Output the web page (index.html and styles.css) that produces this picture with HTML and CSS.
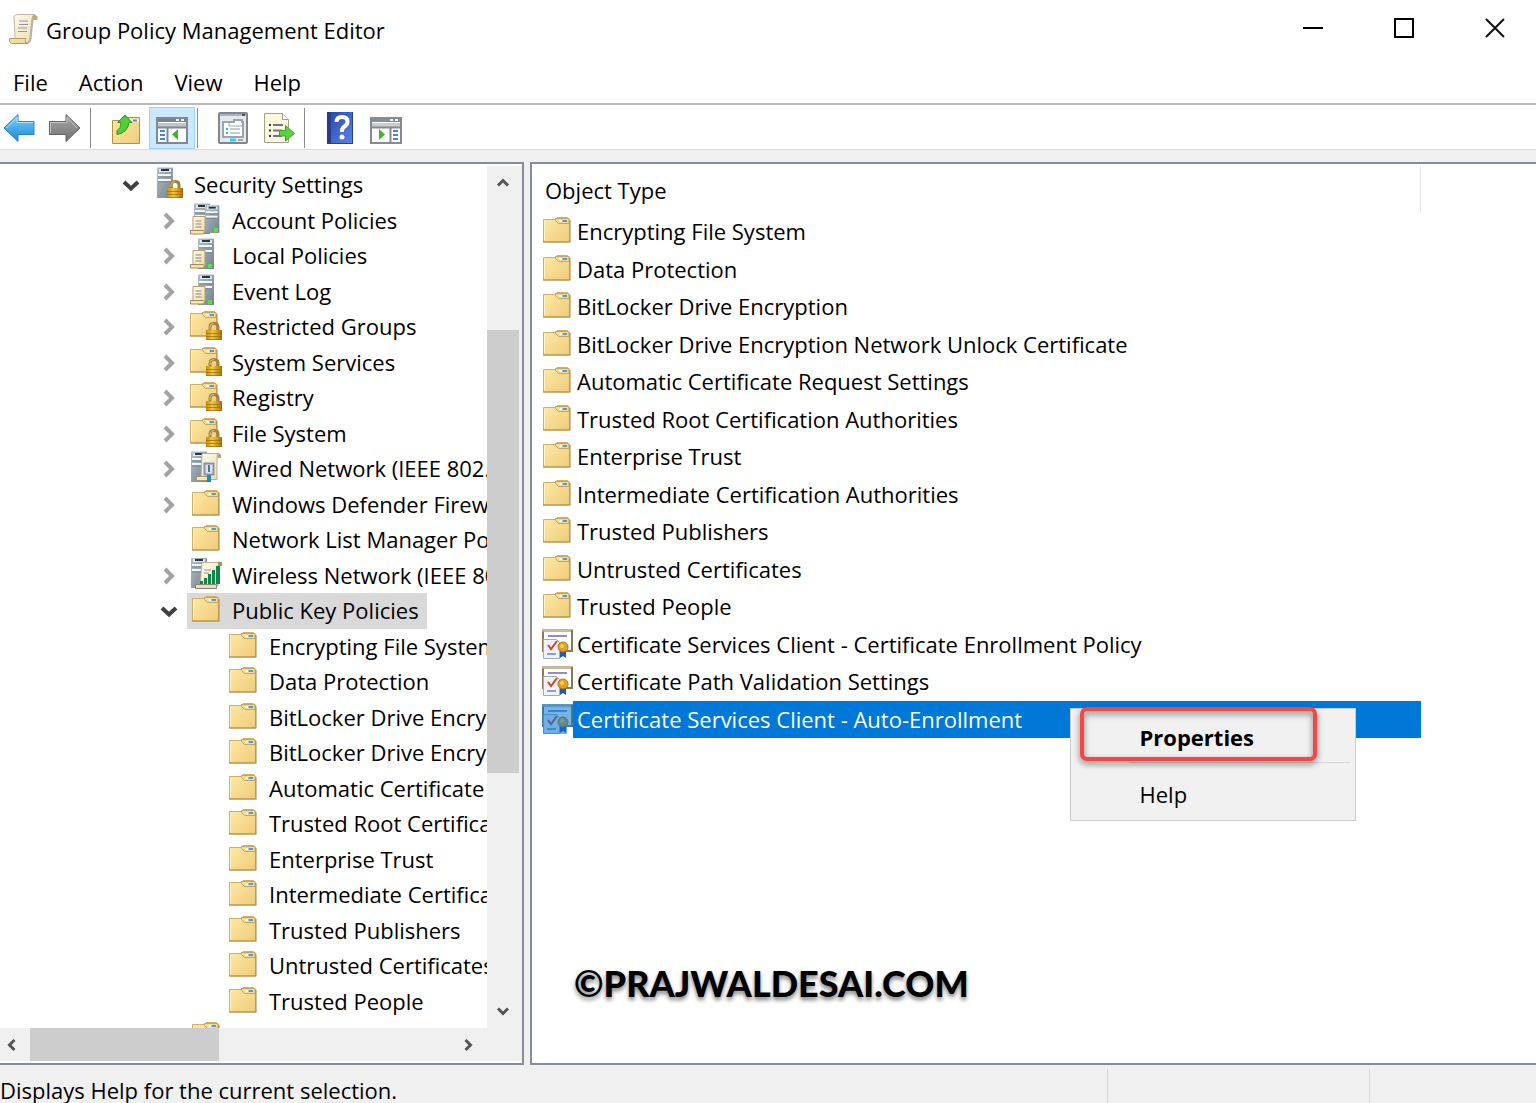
FILE: index.html
```html
<!DOCTYPE html>
<html lang="en">
<head>
    <meta charset="UTF-8">
    <meta name="viewport" content="width=device-width, initial-scale=1.0">
    <title>Group Policy Management Editor</title>
    <link rel="stylesheet" href="styles.css">
</head>
<body>
    <!-- shared icons -->
    <svg class="sprite" aria-hidden="true">
        <defs>
            <linearGradient id="gFolder" x1="0" y1="0" x2="1" y2="1">
                <stop offset="0" stop-color="#ffeaa6"/><stop offset="1" stop-color="#efcb7a"/>
            </linearGradient>
            <linearGradient id="gServer" x1="0" y1="0" x2="1" y2="1">
                <stop offset="0" stop-color="#b4c0c8"/><stop offset="1" stop-color="#71808c"/>
            </linearGradient>
            <linearGradient id="gPaper" x1="0" y1="0" x2="1" y2="1">
                <stop offset="0" stop-color="#fffdf0"/><stop offset="1" stop-color="#eadba9"/>
            </linearGradient>
            <linearGradient id="gBlue" x1="0" y1="0" x2="0" y2="1">
                <stop offset="0" stop-color="#7fd0f8"/><stop offset="1" stop-color="#1589d8"/>
            </linearGradient>
            <linearGradient id="gGray" x1="0" y1="0" x2="0" y2="1">
                <stop offset="0" stop-color="#aaa"/><stop offset="1" stop-color="#6f6f6f"/>
            </linearGradient>
            <linearGradient id="gHelp" x1="0" y1="0" x2="1" y2="1">
                <stop offset="0" stop-color="#2344ae"/><stop offset="1" stop-color="#5c85e6"/>
            </linearGradient>
            <linearGradient id="gLock" x1="0" y1="0" x2="1" y2="0">
                <stop offset="0" stop-color="#c58a0c"/><stop offset=".4" stop-color="#f2c840"/><stop offset="1" stop-color="#a87000"/>
            </linearGradient>
            <g id="folder">
                <path d="M.5 2.5h11.500l2-2h10.500l2 2v22.500h-26z" fill="url(#gFolder)" stroke="#d0ae68"/>
                <path d="M12.500 1.500h13.500v5h-10.500l-3-3z" fill="#f6dc91" stroke="#c9a45a"/>
                <path d="M16.500 3h3v2h-3z" fill="#fff"/>
                <path d="M19.500 3h4.500v2h-4.500z" fill="#4b9be0"/>
                <path d="M1.500 4v19.500" stroke="#fff3c8"/>
                <path d="M0 25h27.500M27 3v22" stroke="#ab8842" fill="none"/>
            </g>
            <g id="lock">
                <path d="M4 8V5q0-3.500 4-3.500t4 3.500v3" fill="none" stroke="#a38340" stroke-width="3"/>
                <path d="M4 7V5q0-3.500 4-3.500" fill="none" stroke="#d6c17e"/>
                <rect y="8" width="16" height="10" fill="url(#gLock)"/>
                <path d="M0 11.500h16M0 14.500h16M0 17.500h16" stroke="#996600" opacity=".65"/>
            </g>
            <g id="server">
                <rect width="16" height="31" fill="url(#gServer)"/>
                <path d="M0 .5h16" stroke="#d6dee3"/>
                <path d="M2 2h12v3h-12z" fill="#dceaf2"/><path d="M4 2h8v2h-8z" fill="#243440"/>
                <path d="M1 8h13M1 13h13" stroke="#f3f7fa" stroke-width="2"/>
                <path d="M1 10h13M1 15h13" stroke="#7b8994"/>
            </g>
            <g id="scroll">
                <path d="M3 .5h12v15h-12z" fill="url(#gPaper)" stroke="#b59d70"/>
                <path d="M.5 14.500h13q2 1 0 3.500h-13z" fill="#f2e3b5" stroke="#a48b5b"/>
                <path d="M5.500 5h6M5.500 8h6M5.500 11h6" stroke="#8f8577"/>
            </g>
        </defs>
        <symbol id="i-folder" viewBox="0 0 32 32"><use href="#folder" x="2" y="3"/></symbol>
        <symbol id="i-folder-lock" viewBox="0 0 32 32"><use href="#folder" x="0" y="2"/><use href="#lock" x="16" y="13"/></symbol>
        <symbol id="i-server-lock" viewBox="0 0 32 32"><use href="#server" x="5" y="0"/><use href="#lock" x="15" y="13"/></symbol>
        <symbol id="i-servers" viewBox="0 0 32 32">
            <use href="#server" x="4" y="0"/>
            <g transform="translate(15 2) scale(.9 .9)"><use href="#server" x="0" y="0"/></g>
            <use href="#scroll" x="0" y="13"/>
            <path d="M24 25h4v4h-4z" fill="#4be834"/>
        </symbol>
        <symbol id="i-server" viewBox="0 0 32 32">
            <use href="#server" x="8" y="0"/>
            <use href="#scroll" x="0" y="12"/>
            <path d="M18 26h4v4h-4z" fill="#4be834"/>
        </symbol>
        <symbol id="i-wired" viewBox="0 0 32 32">
            <use href="#server" x="1" y="0"/>
            <path d="M12 2.500h17q-2 1-2 4v22h-16z" fill="url(#gPaper)" stroke="#b9ae92"/>
            <path d="M27.500 7V4q2-3 3.500 0v3z" fill="#b6a36d"/>
            <path d="M6.500 25.500h14v4h-14z" fill="#f5e9c1" stroke="#a79774"/>
            <path d="M14.500 12.500h9v11h-9z" fill="#dfe4ef" stroke="#8793ad" stroke-width="2"/>
            <path d="M19 14v7" stroke="#5f6e92" stroke-width="2"/>
            <path d="M17 24h4v7h-4z" fill="#168eb9"/>
        </symbol>
        <symbol id="i-wireless" viewBox="0 0 32 32">
            <use href="#server" x="1" y="-1"/>
            <path d="M12 4.500h18l-2 3v20h-18z" fill="url(#gPaper)" stroke="#b9ae92"/>
            <path d="M28 4h4v4h-4z" fill="#a49568"/>
            <path d="M14 12h7M14 15h5" stroke="#9794a0"/>
            <path d="M5.500 26.500h21v4h-21z" fill="#e3dcc7" stroke="#8d8270"/>
            <path d="M10 26v-3h3v3zM14 26v-6h3v6zM18 26v-10h3v10zM22 26v-14h3v14zM26 26v-18h4v18z" fill="#128548"/>
        </symbol>
        <symbol id="i-cert" viewBox="0 0 32 32">
            <path d="M2 3.500h29v20.500h-29z" fill="#fff" stroke="#8f7750" stroke-width="2"/>
            <path d="M1 3.500h29" stroke="#c9b896" stroke-width="2"/>
            <path d="M7 9h19" stroke="#8790cc" stroke-width="2"/>
            <path d="M2.500 12.500h13l3 3v16h-16z" fill="#f1f3f8" stroke="#a3a9b5"/>
            <path d="M7 18l3 4 6-8" fill="none" stroke="#d2402a" stroke-width="2"/>
            <path d="M6 27h9" stroke="#7ea2e4" stroke-width="2"/>
            <path d="M19 23v8l3-2 3 2v-8z" fill="#1d55c4"/>
            <circle cx="22" cy="20" r="5" fill="#e5a11c" stroke="#b37707"/>
            <circle cx="21" cy="19" r="2" fill="#f8cf5a"/>
        </symbol>
        <symbol id="i-app" viewBox="0 0 32 32">
            <path d="M6 2.500q1-2 4-2h17q-3 1-3 4l-2 20q-1 5-5 5h-14q4-1 4-6z" fill="url(#gPaper)" stroke="#bdb7a5"/>
            <path d="M24 6q0-5 3-5 4 1 2 5z" fill="#c3ac6b"/>
            <path d="M24.500 6l-2 19q-1 4-5 4.500" fill="none" stroke="#b7b3aa" stroke-width="2"/>
            <path d="M1.500 24.500h16q-1 5 2 5h-16q-3-1-2-5z" fill="#efdda6" stroke="#b29c63"/>
            <path d="M11 7h9M11 10.500h9M10 14h9M10 17.500h9" stroke="#9696a8"/>
        </symbol>
        <symbol id="i-back" viewBox="0 0 32 32">
            <path d="M1 16L15 2.500V9.500H31V22.500H15V29.500z" fill="url(#gBlue)" stroke="#2d83b8"/>
            <path d="M3.500 16L14 5.500V10.500H30" fill="none" stroke="#b5e6fc"/>
        </symbol>
        <symbol id="i-forward" viewBox="0 0 32 32">
            <path d="M31 16L17 2.500V9.500H.5V22.500H17V29.500z" fill="url(#gGray)" stroke="#636363"/>
            <path d="M1.500 21V10.500H18V5.500L28 16" fill="none" stroke="#c4c4c4"/>
        </symbol>
        <symbol id="i-up" viewBox="0 0 32 32">
            <path d="M2.500 8.500h13l2-3h12v26h-27z" fill="url(#gFolder)" stroke="#b68f43"/>
            <path d="M19 8.500h10" stroke="#fff" stroke-width="2"/><path d="M23 8.500h4" stroke="#3c93df" stroke-width="2"/>
            <path d="M7 22.500v-4q4-2 4-8H7.500L15 3l7 7.500h-3q-1 10-12 12z" fill="#52cc38" stroke="#2e9822"/>
        </symbol>
        <symbol id="i-tree" viewBox="0 0 32 32">
            <path d="M1 6h30v25h-30z" fill="#fff" stroke="#7e8898" stroke-width="2"/>
            <path d="M2 7h28v3h-28z" fill="#768295"/><path d="M2 11h28v4h-28z" fill="#c2c7cf"/>
            <path d="M20 8h3M25 8h3" stroke="#f2f5f8" stroke-width="2"/>
            <path d="M1 15.500h30M11.500 15v16" stroke="#7e8898" stroke-width="2"/>
            <path d="M4 19h5M4 23h5M4 27h5" stroke="#4589c9" stroke-width="2"/>
            <path d="M22 17v11l-6-5.500z" fill="#42b529"/>
        </symbol>
        <symbol id="i-actions" viewBox="0 0 32 32">
            <path d="M1 6h30v25h-30z" fill="#fff" stroke="#858a91" stroke-width="2"/>
            <path d="M2 7h28v3h-28z" fill="#858d98"/><path d="M2 11h28v4h-28z" fill="#c9ccd1"/>
            <path d="M20 8h3M25 8h3" stroke="#f2f5f8" stroke-width="2"/>
            <path d="M1 15.500h30M20.500 15v16" stroke="#858a91" stroke-width="2"/>
            <path d="M23 19h5M23 23h5M23 27h5" stroke="#4589c9" stroke-width="2"/>
            <path d="M9 17v11l6-5.500z" fill="#42b529"/>
        </symbol>
        <symbol id="i-props" viewBox="0 0 32 32">
            <rect x="2" y="1" width="28" height="30" rx="1" fill="#e7eaed" stroke="#7f878f" stroke-width="2"/>
            <path d="M3 3h26" stroke="#aab4bf" stroke-width="2"/><path d="M25 3h3" stroke="#44546a" stroke-width="2"/>
            <path d="M6 10h11v-2h8v2h1v15H6z" fill="#fff" stroke="#9aa5b3" stroke-width="2"/>
            <path d="M12 11v3h13" fill="none" stroke="#9aa5b3"/>
            <path d="M9 17h2M9 21h2" stroke="#18bff2" stroke-width="2"/>
            <path d="M13 17h10M13 21h10" stroke="#8e98a5"/>
            <path d="M13 28h6" stroke="#22cff5" stroke-width="3"/><path d="M21 28h5" stroke="#a1a8af" stroke-width="2"/>
        </symbol>
        <symbol id="i-export" viewBox="0 0 32 32">
            <path d="M1.500 1.500h18l6 6v23h-24z" fill="#fcf7df" stroke="#a49e8f"/>
            <path d="M19.500 1.500v6h6" fill="#fff" stroke="#a49e8f"/>
            <path d="M6 13h2M6 18.500h2M6 24h2" stroke="#333" stroke-width="2"/>
            <path d="M10 13h10M10 18.500h9M10 24h9" stroke="#78708e" stroke-width="2"/>
            <path d="M16.500 18.500h6v-5l9 8-9 7.500v-5h-6z" fill="#5fd044" stroke="#38a528"/>
        </symbol>
        <symbol id="i-help" viewBox="0 0 32 32">
            <path d="M3 0h26v32h-26z" fill="url(#gHelp)"/>
            <path d="M3 0h4v32h-4z" fill="#2a3c83"/>
            <path d="M12.500 10q0-5 5.500-5t5.500 4.500q0 3-3 5t-2.500 5.500" fill="none" stroke="#fff" stroke-width="4"/>
            <circle cx="18" cy="25" r="2.500" fill="#fff"/>
            <path d="M3 31.500h26M28.500 0v32" stroke="#2541a0"/>
        </symbol>
        <symbol id="i-closed" viewBox="0 0 18 18"><path d="M5 2l7 7-7 7" fill="none" stroke="#a3a3a3" stroke-width="4"/></symbol>
        <symbol id="i-open" viewBox="0 0 18 18"><path d="M2 6l7 6.500L16 6" fill="none" stroke="#404040" stroke-width="4"/></symbol>
        <symbol id="i-arrow" viewBox="0 0 14 14"><path d="M2 9.500L7 4.500l5 5" fill="none" stroke="#555" stroke-width="3"/></symbol>
    </svg>

    <header class="title-bar">
        <svg class="icon"><use href="#i-app"/></svg>
        <h1>Group Policy Management Editor</h1>
        <div class="window-buttons">
            <button type="button" aria-label="Minimize"><svg viewBox="0 0 20 20"><path d="M0 10h20" stroke="#000" stroke-width="2"/></svg></button>
            <button type="button" aria-label="Maximize"><svg viewBox="0 0 20 20"><path d="M1 1h18v18H1z" fill="none" stroke="#000" stroke-width="2"/></svg></button>
            <button type="button" aria-label="Close"><svg viewBox="0 0 20 20"><path d="M1 1l18 18M19 1L1 19" stroke="#111" stroke-width="2"/></svg></button>
        </div>
    </header>

    <nav class="menu-bar">
        <button type="button">File</button>
        <button type="button">Action</button>
        <button type="button">View</button>
        <button type="button">Help</button>
    </nav>

    <div class="toolbar">
        <button type="button" class="tool" aria-label="Back"><svg class="icon"><use href="#i-back"/></svg></button>
        <button type="button" class="tool" aria-label="Forward"><svg class="icon"><use href="#i-forward"/></svg></button>
        <span class="divider"></span>
        <button type="button" class="tool" aria-label="Up one level"><svg class="icon"><use href="#i-up"/></svg></button>
        <button type="button" class="tool active" aria-label="Show console tree"><svg class="icon"><use href="#i-tree"/></svg></button>
        <span class="divider"></span>
        <button type="button" class="tool" aria-label="Properties"><svg class="icon"><use href="#i-props"/></svg></button>
        <button type="button" class="tool" aria-label="Export list"><svg class="icon"><use href="#i-export"/></svg></button>
        <span class="divider"></span>
        <button type="button" class="tool" aria-label="Help"><svg class="icon"><use href="#i-help"/></svg></button>
        <button type="button" class="tool" aria-label="Show action pane"><svg class="icon"><use href="#i-actions"/></svg></button>
    </div>

    <main>
        <section class="tree-pane">
            <ul class="tree">
                <li><svg class="chevron"><use href="#i-open"/></svg><span class="node"><svg class="icon"><use href="#i-server-lock"/></svg>Security Settings</span></li>
                <li class="level1"><svg class="chevron"><use href="#i-closed"/></svg><span class="node"><svg class="icon"><use href="#i-servers"/></svg>Account Policies</span></li>
                <li class="level1"><svg class="chevron"><use href="#i-closed"/></svg><span class="node"><svg class="icon"><use href="#i-server"/></svg>Local Policies</span></li>
                <li class="level1"><svg class="chevron"><use href="#i-closed"/></svg><span class="node"><svg class="icon"><use href="#i-server"/></svg>Event Log</span></li>
                <li class="level1"><svg class="chevron"><use href="#i-closed"/></svg><span class="node"><svg class="icon"><use href="#i-folder-lock"/></svg>Restricted Groups</span></li>
                <li class="level1"><svg class="chevron"><use href="#i-closed"/></svg><span class="node"><svg class="icon"><use href="#i-folder-lock"/></svg>System Services</span></li>
                <li class="level1"><svg class="chevron"><use href="#i-closed"/></svg><span class="node"><svg class="icon"><use href="#i-folder-lock"/></svg>Registry</span></li>
                <li class="level1"><svg class="chevron"><use href="#i-closed"/></svg><span class="node"><svg class="icon"><use href="#i-folder-lock"/></svg>File System</span></li>
                <li class="level1"><svg class="chevron"><use href="#i-closed"/></svg><span class="node"><svg class="icon"><use href="#i-wired"/></svg>Wired Network (IEEE 802.3) Policies</span></li>
                <li class="level1"><svg class="chevron"><use href="#i-closed"/></svg><span class="node"><svg class="icon"><use href="#i-folder"/></svg>Windows Defender Firewall</span></li>
                <li class="level1"><svg class="chevron"></svg><span class="node"><svg class="icon"><use href="#i-folder"/></svg>Network List Manager Policies</span></li>
                <li class="level1"><svg class="chevron"><use href="#i-closed"/></svg><span class="node"><svg class="icon"><use href="#i-wireless"/></svg>Wireless Network (IEEE 802.11)</span></li>
                <li class="level1"><svg class="chevron"><use href="#i-open"/></svg><span class="node selected"><svg class="icon"><use href="#i-folder"/></svg>Public Key Policies</span></li>
                <li class="level2"><svg class="chevron"></svg><span class="node"><svg class="icon"><use href="#i-folder"/></svg>Encrypting File System</span></li>
                <li class="level2"><svg class="chevron"></svg><span class="node"><svg class="icon"><use href="#i-folder"/></svg>Data Protection</span></li>
                <li class="level2"><svg class="chevron"></svg><span class="node"><svg class="icon"><use href="#i-folder"/></svg>BitLocker Drive Encryption</span></li>
                <li class="level2"><svg class="chevron"></svg><span class="node"><svg class="icon"><use href="#i-folder"/></svg>BitLocker Drive Encryption</span></li>
                <li class="level2"><svg class="chevron"></svg><span class="node"><svg class="icon"><use href="#i-folder"/></svg>Automatic Certificate Request</span></li>
                <li class="level2"><svg class="chevron"></svg><span class="node"><svg class="icon"><use href="#i-folder"/></svg>Trusted Root Certification</span></li>
                <li class="level2"><svg class="chevron"></svg><span class="node"><svg class="icon"><use href="#i-folder"/></svg>Enterprise Trust</span></li>
                <li class="level2"><svg class="chevron"></svg><span class="node"><svg class="icon"><use href="#i-folder"/></svg>Intermediate Certification</span></li>
                <li class="level2"><svg class="chevron"></svg><span class="node"><svg class="icon"><use href="#i-folder"/></svg>Trusted Publishers</span></li>
                <li class="level2"><svg class="chevron"></svg><span class="node"><svg class="icon"><use href="#i-folder"/></svg>Untrusted Certificates</span></li>
                <li class="level2"><svg class="chevron"></svg><span class="node"><svg class="icon"><use href="#i-folder"/></svg>Trusted People</span></li>
                <li class="level1"><svg class="chevron"></svg><span class="node"><svg class="icon"><use href="#i-folder"/></svg></span></li>
            </ul>
            <div class="scrollbar vertical">
                <button type="button" aria-label="Scroll up"><svg><use href="#i-arrow"/></svg></button>
                <div class="track"><div class="thumb"></div></div>
                <button type="button" class="down" aria-label="Scroll down"><svg><use href="#i-arrow"/></svg></button>
            </div>
            <div class="scrollbar horizontal">
                <button type="button" class="left" aria-label="Scroll left"><svg><use href="#i-arrow"/></svg></button>
                <div class="track"><div class="thumb"></div></div>
                <button type="button" class="right" aria-label="Scroll right"><svg><use href="#i-arrow"/></svg></button>
            </div>
        </section>

        <section class="list-pane">
            <table>
                <thead>
                    <tr><th>Object Type</th></tr>
                </thead>
                <tbody>
                    <tr><td><div class="item"><svg class="icon"><use href="#i-folder"/></svg><span>Encrypting File System</span></div></td></tr>
                    <tr><td><div class="item"><svg class="icon"><use href="#i-folder"/></svg><span>Data Protection</span></div></td></tr>
                    <tr><td><div class="item"><svg class="icon"><use href="#i-folder"/></svg><span>BitLocker Drive Encryption</span></div></td></tr>
                    <tr><td><div class="item"><svg class="icon"><use href="#i-folder"/></svg><span>BitLocker Drive Encryption Network Unlock Certificate</span></div></td></tr>
                    <tr><td><div class="item"><svg class="icon"><use href="#i-folder"/></svg><span>Automatic Certificate Request Settings</span></div></td></tr>
                    <tr><td><div class="item"><svg class="icon"><use href="#i-folder"/></svg><span>Trusted Root Certification Authorities</span></div></td></tr>
                    <tr><td><div class="item"><svg class="icon"><use href="#i-folder"/></svg><span>Enterprise Trust</span></div></td></tr>
                    <tr><td><div class="item"><svg class="icon"><use href="#i-folder"/></svg><span>Intermediate Certification Authorities</span></div></td></tr>
                    <tr><td><div class="item"><svg class="icon"><use href="#i-folder"/></svg><span>Trusted Publishers</span></div></td></tr>
                    <tr><td><div class="item"><svg class="icon"><use href="#i-folder"/></svg><span>Untrusted Certificates</span></div></td></tr>
                    <tr><td><div class="item"><svg class="icon"><use href="#i-folder"/></svg><span>Trusted People</span></div></td></tr>
                    <tr><td><div class="item"><svg class="icon"><use href="#i-cert"/></svg><span>Certificate Services Client - Certificate Enrollment Policy</span></div></td></tr>
                    <tr><td><div class="item"><svg class="icon"><use href="#i-cert"/></svg><span>Certificate Path Validation Settings</span></div></td></tr>
                    <tr><td>
                        <div class="item selected">
                            <svg class="icon" viewBox="0 0 32 32"><use href="#i-cert"/><path d="M1 2h31v23h-6v7h-24v-7h-1z" fill="#0078d7" opacity=".55"/></svg>
                            <span>Certificate Services Client - Auto-Enrollment</span>
                            <div class="context-menu">
                                <button type="button" class="default">Properties</button>
                                <hr>
                                <button type="button">Help</button>
                                <div class="callout"></div>
                            </div>
                        </div>
                    </td></tr>
                </tbody>
            </table>
            <p class="watermark">©PRAJWALDESAI.COM</p>
        </section>
    </main>

    <footer class="status-bar">
        <span class="message">Displays Help for the current selection.</span>
        <span class="cell"></span>
        <span class="cell last"></span>
    </footer>
</body>
</html>
```
FILE: styles.css
```css
* {
    box-sizing: border-box;
}
body {
    display: flex;
    flex-direction: column;
    height: 100vh;
    margin: 0;
    overflow: hidden;
    background: #f0f0f0;
    color: #000;
    font-family: "Segoe UI", "Open Sans", sans-serif;
    font-size: 22px;
    line-height: 30px;
}
button {
    padding: 0;
    border: none;
    background: none;
    color: inherit;
    font: inherit;
}
.sprite {
    position: absolute;
    width: 0;
    height: 0;
}
.icon {
    display: block;
    flex: none;
    width: 32px;
    height: 32px;
}

/* title and menu */
.title-bar {
    display: flex;
    flex: none;
    align-items: center;
    height: 60px;
    padding: 0 0 1px 8px;
    background: #fff;
}
h1 {
    flex: 1;
    margin: 0 0 0 6px;
    font-size: 22px;
    font-weight: normal;
}
.window-buttons {
    display: flex;
    gap: 9px;
    align-self: flex-start;
}
.window-buttons button {
    display: flex;
    align-items: center;
    justify-content: center;
    width: 82px;
    height: 56px;
}
.window-buttons svg {
    width: 20px;
    height: 20px;
}
.menu-bar {
    display: flex;
    flex: none;
    gap: 31px;
    height: 45px;
    padding: 0 13px;
    background: #fff;
    border-bottom: 2px solid #b9b9b9;
}

/* toolbar */
.toolbar {
    display: flex;
    flex: none;
    height: 45px;
    padding: 2px 0 0;
    background: #fff;
    border-bottom: 1px solid #dcdcdc;
}
.tool {
    display: flex;
    align-items: center;
    justify-content: center;
    width: 46px;
}
.tool:first-child {
    width: 42px;
    padding-right: 4px;
}
.tool.active {
    background: #cce8ff;
    border: 1px solid #99d1ff;
}
.divider {
    width: 1px;
    margin: 1px 12px 1px 2px;
    background: #8c8c8c;
}

/* panes */
main {
    display: flex;
    flex: 1;
    gap: 6px;
    min-height: 0;
    padding-top: 12px;
}
.tree-pane {
    display: grid;
    flex: none;
    grid-template-columns: 1fr 35px;
    grid-template-rows: 1fr 35px;
    width: 524px;
    padding-top: 2px;
    background: #fff;
    border: 2px solid #868c98;
    border-left: none;
}
.tree {
    min-height: 0;
    margin: 0;
    padding: 1px 0 0;
    overflow: hidden;
    list-style: none;
}
.tree li {
    display: flex;
    height: 36px;
    padding-left: 114px;
    line-height: 34px;
    white-space: nowrap;
}
.tree li:nth-child(even) {
    height: 35px;
}
.tree .level1 {
    padding-left: 152px;
}
.tree .level2 {
    padding-left: 189px;
}
.chevron {
    flex: none;
    align-self: center;
    width: 34px;
    height: 18px;
}
.node {
    display: flex;
    gap: 10px;
    margin-left: 1px;
    padding: 0 8px 0 3px;
}
.node.selected {
    background: #d9d9d9;
}

/* scroll bars */
.scrollbar {
    display: flex;
    background: #f0f0f0;
}
.scrollbar button {
    display: flex;
    flex: none;
    align-items: center;
    justify-content: center;
}
.scrollbar svg {
    width: 14px;
    height: 14px;
}
.track {
    display: flex;
    flex: 1;
}
.thumb {
    background: #cdcdcd;
}
.vertical {
    flex-direction: column;
}
.vertical button {
    width: 32px;
    height: 34px;
}
.vertical .track {
    flex-direction: column;
    padding: 130px 3px 221px 0;
}
.vertical .thumb {
    flex: 1;
}
.horizontal {
    grid-column: 1 / 3;
    padding-right: 35px;
    border-bottom: 2px solid #fff;
}
.horizontal button {
    width: 30px;
}
.horizontal .left {
    padding-right: 6px;
}
.horizontal .right {
    width: 38px;
}
.horizontal .thumb {
    width: 45%;
}
.down svg {
    transform: rotate(180deg);
}
.left svg {
    transform: rotate(-90deg);
}
.right svg {
    transform: rotate(90deg);
}

/* object list */
.list-pane {
    position: relative;
    flex: 1;
    padding: 2px 115px 0 0;
    background: #fff;
    border: 2px solid #868c98;
    border-right: none;
}
table {
    width: 100%;
    border-collapse: collapse;
}
th {
    height: 47px;
    padding: 1px 13px 0;
    border-right: 1px solid #e5e5e5;
    font-weight: normal;
    text-align: left;
}
td {
    padding: 0;
}
.item {
    position: relative;
    display: flex;
    height: 38px;
    padding-left: 9px;
    line-height: 36px;
}
tr:nth-child(even) .item {
    height: 37px;
}
.item .icon {
    margin-top: 1px;
}
.item span {
    flex: 1;
    padding-left: 4px;
}
.item.selected span {
    background: #0078d7;
    color: #fff;
}
.context-menu {
    position: absolute;
    top: 7px;
    right: 65px;
    width: 286px;
    padding: 5px 5px 3px;
    background: #f1f1f1;
    border: 1px solid #ccc;
    color: #000;
    line-height: 46px;
}
.context-menu button {
    display: block;
    width: 100%;
    padding-left: 64px;
    text-align: left;
}
.context-menu .default {
    font-weight: bold;
}
.context-menu hr {
    margin: 2px 0 8px 54px;
    border: none;
    border-top: 1px solid #d9d9d9;
}
.callout {
    position: absolute;
    top: -2px;
    left: 9px;
    width: 237px;
    height: 54px;
    border: 4px solid #f94545;
    border-radius: 7px;
    filter: drop-shadow(0 3px 3px rgba(0, 0, 0, 0.5));
    pointer-events: none;
}
.watermark {
    position: absolute;
    bottom: 60px;
    left: 42px;
    margin: 0;
    font-family: Lato, sans-serif;
    font-size: 36px;
    font-weight: 900;
    line-height: 40px;
    text-shadow: 0 3px 4px rgba(0, 0, 0, 0.5);
}

/* status bar */
.status-bar {
    display: flex;
    flex: none;
    height: 38px;
    padding-top: 4px;
    overflow: hidden;
    white-space: nowrap;
}
.message {
    flex: 1;
    padding-top: 6px;
}
.cell {
    width: 262px;
    border-left: 1px solid #d7d7d7;
}
.cell.last {
    width: 167px;
}
```
